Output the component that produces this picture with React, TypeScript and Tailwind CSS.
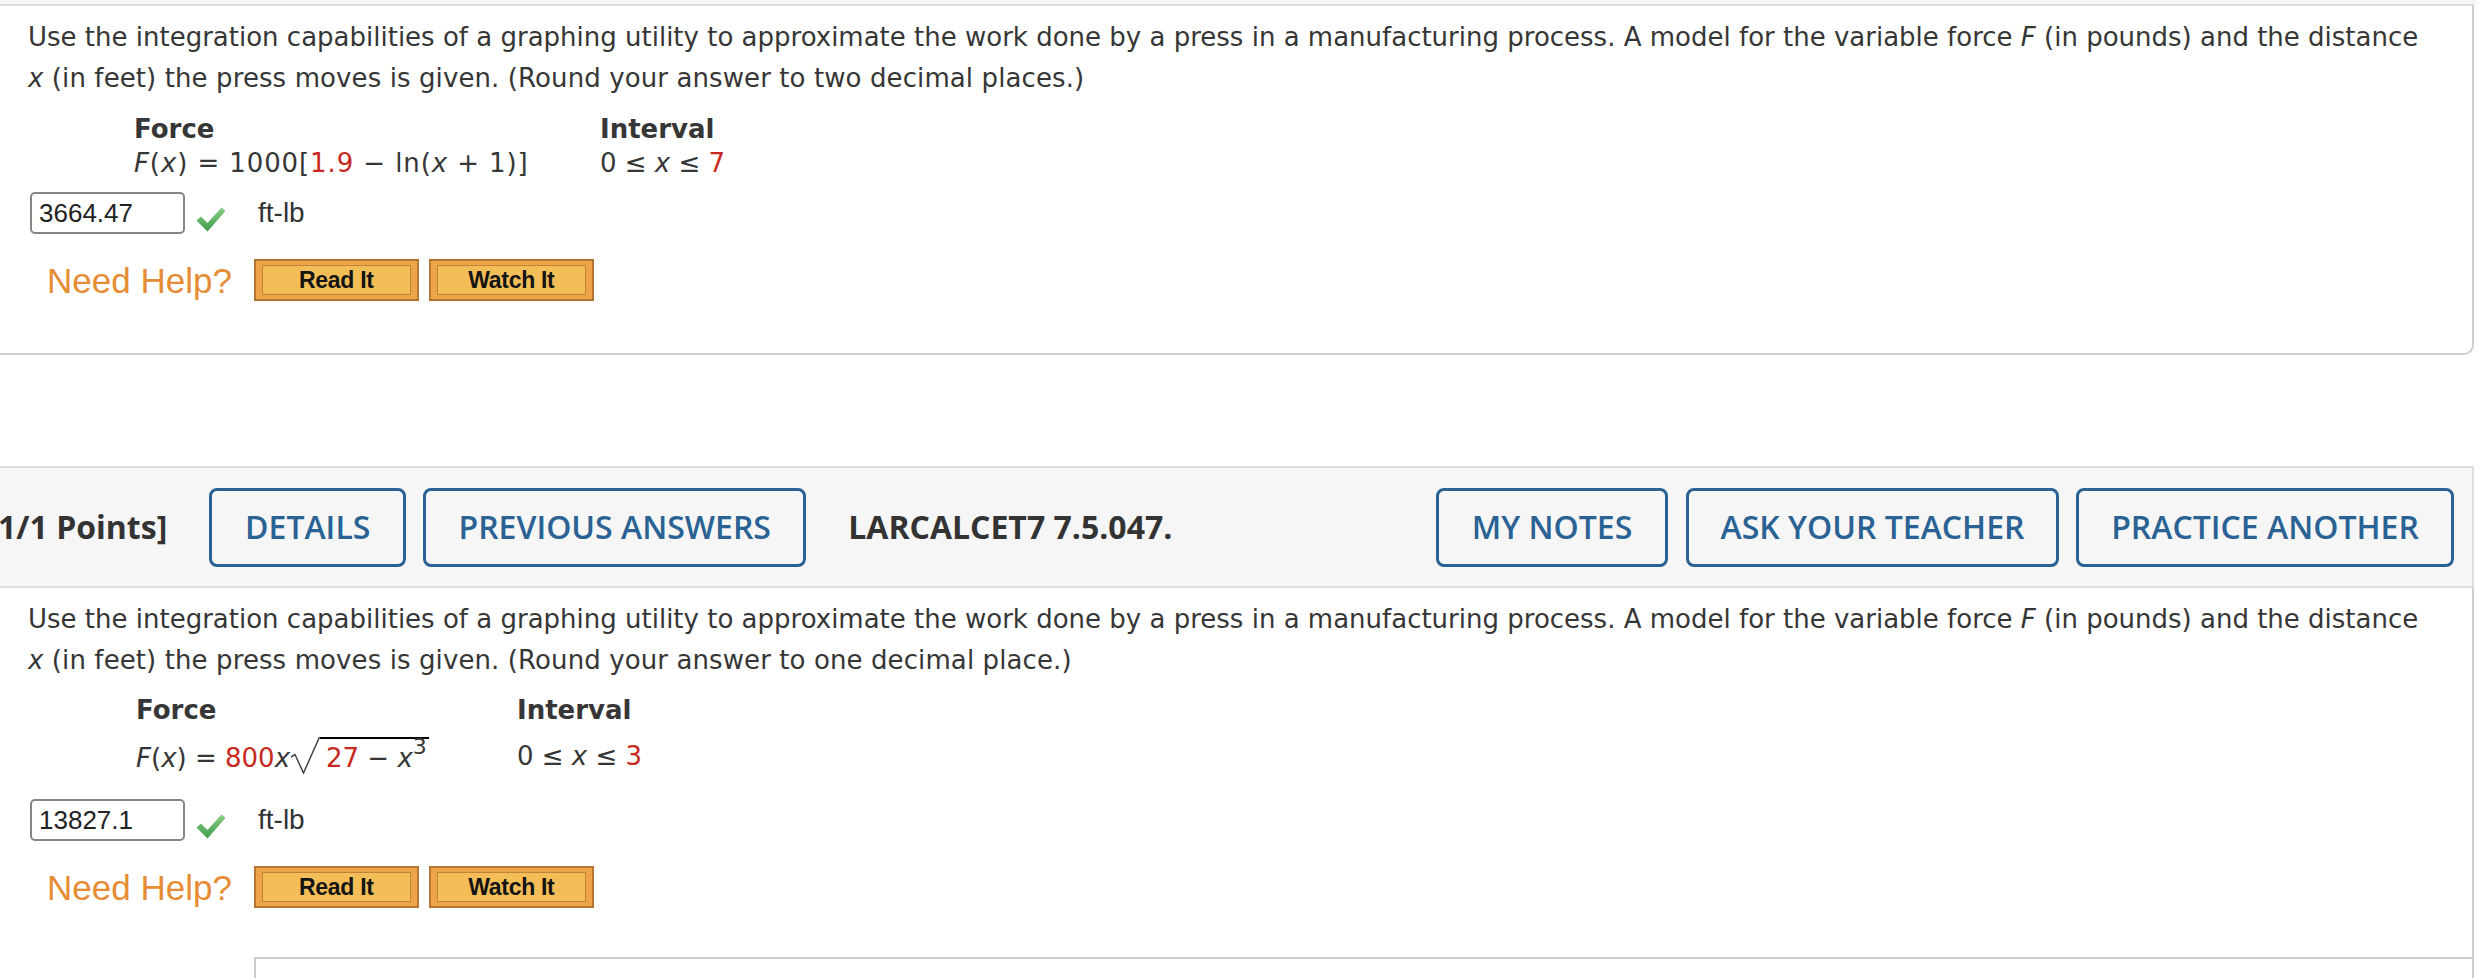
import React from "react";

const body = "font-['DejaVu_Sans',Verdana,sans-serif] text-[#363636]";
const arial = "font-['Liberation_Sans',Arial,sans-serif]";
const open = "font-['Open_Sans',sans-serif]";
const red = "text-[#c8281e]";

function Check() {
  return (
    <svg width="30" height="25" viewBox="0 0 30 25" aria-hidden="true">
      <defs>
        <linearGradient id="ck" x1="0" y1="0" x2="0" y2="1">
          <stop offset="0" stopColor="#8bd087" />
          <stop offset="1" stopColor="#3f9a4a" />
        </linearGradient>
      </defs>
      <path d="M0.5 13.5 L5 9.5 L11.5 16 L25.5 0.5 L29.5 4 L11.5 24.5 Z" fill="url(#ck)" />
    </svg>
  );
}

function HelpButton({ label, className }: { label: string; className?: string }) {
  return (
    <div className={`h-[42px] w-[165px] border-2 border-[#b5762f] bg-[#eea448] px-[6px] py-[4px] ${className ?? ""}`}>
      <div className={`flex h-full items-center justify-center border border-[#c08438] bg-[#f3be57] ${arial} text-[23px] font-bold tracking-[-0.3px] text-[#141414]`}>
        {label}
      </div>
    </div>
  );
}

function Answer({ value }: { value: string }) {
  return (
    <div className="ml-[2px] flex items-center">
      <div className={`flex h-[42px] w-[155px] items-center rounded-[5px] border-2 border-[#858585] pl-[7px] ${arial} text-[26px] text-[#222]`}>
        {value}
      </div>
      <div className="ml-[11px] mt-[12px]">
        <Check />
      </div>
      <span className={`ml-[32px] ${arial} text-[28px] text-[#333]`}>ft-lb</span>
    </div>
  );
}

function NeedHelp({ className }: { className?: string }) {
  return (
    <div className={`ml-[19px] flex items-center ${className ?? ""}`}>
      <span className={`${arial} text-[35px] leading-none text-[#e58c35]`}>Need Help?</span>
      <HelpButton label="Read It" className="ml-[22px]" />
      <HelpButton label="Watch It" className="ml-[10px]" />
    </div>
  );
}

function Question({ places }: { places: string }) {
  return (
    <p className="whitespace-nowrap text-[26px] leading-[41px]">
      Use the integration capabilities of a graphing utility to approximate the work done by a press in a
      manufacturing process. A model for the variable force <i>F</i> (in pounds) and the distance
      <br />
      <span className="tracking-[0.1px]">
        <i>x</i> (in feet) the press moves is given. (Round your answer to {places}.)
      </span>
    </p>
  );
}

function Radical() {
  return (
    <span className="inline-flex items-start">
      <svg width="30" height="38" viewBox="0 0 30 38" aria-hidden="true" className="mt-[-1px]">
        <path d="M1 21 L5 18.5 L13.5 37 L29.5 1" stroke="#444" strokeWidth="1.5" fill="none" />
      </svg>
      <span className="border-t-2 border-black pl-[6px] pr-[2px] pt-[2px] leading-[34px]">
        <span className={red}>27</span> − <i>x</i>
        <sup className="top-[-13px] text-[22px]">3</sup>
      </span>
    </span>
  );
}

function Bar() {
  const btn = `flex h-[79px] items-center justify-center rounded-[8px] border-[3px] border-[#2a6294] ${open} text-[32px] font-semibold text-[#2a6294]`;
  return (
    <div className={`mt-[111px] mr-[4px] flex h-[122px] items-center border-y-2 border-r-2 border-[#dedede] bg-[#f6f6f6] pr-[18px] ${open}`}>
      <span className="ml-[-2px] text-[32px] font-bold text-[#333]">1/1 Points]</span>
      <div className={`ml-[42px] w-[197px] ${btn}`}>DETAILS</div>
      <div className={`ml-[17px] w-[383px] ${btn}`}>PREVIOUS ANSWERS</div>
      <span className="ml-[42px] text-[32px] font-bold text-[#333]">LARCALCET7 7.5.047.</span>
      <div className="flex-1" />
      <div className={`w-[232px] ${btn}`}>MY NOTES</div>
      <div className={`ml-[18px] w-[373px] ${btn}`}>ASK YOUR TEACHER</div>
      <div className={`ml-[17px] w-[378px] ${btn}`}>PRACTICE ANOTHER</div>
    </div>
  );
}

export default function App() {
  return (
    <div className={`h-[978px] w-[2478px] overflow-hidden bg-white ${body}`}>
      <div className="h-[4px] bg-[#f6f6f6]" />

      <section className="mr-[4px] h-[351px] rounded-br-[10px] border-y-2 border-r-2 border-t-[#dcdcdc] border-r-[#cfcfcf] border-b-[#cfcfcf] pl-[28px] pt-[11px]">
        <Question places="two decimal places" />
        <div className="ml-[106px] mt-[13px] grid grid-cols-[466px_auto] text-[26px] leading-[34px]">
          <b>Force</b>
          <b>Interval</b>
          <span className="tracking-[0.9px]">
            <i>F</i>(<i>x</i>) = 1000[<span className={red}>1.9</span> − ln(<i>x</i> + 1)]
          </span>
          <span>
            0 ≤ <i>x</i> ≤ <span className={red}>7</span>
          </span>
        </div>
        <div className="mt-[12px]">
          <Answer value="3664.47" />
        </div>
        <NeedHelp className="mt-[25px]" />
      </section>

      <Bar />

      <section className="mr-[4px] h-[400px] border-r-2 border-[#cfcfcf] pt-[11px]">
        <div className="pl-[28px]">
          <Question places="one decimal place" />
          <div className="ml-[108px] mt-[12px] grid grid-cols-[381px_auto] items-end text-[26px] leading-[34px]">
            <b>Force</b>
            <b>Interval</b>
            <span className="mt-[10px] flex items-end">
              <span>
                <i>F</i>(<i>x</i>) = <span className={red}>800</span>
                <i>x</i>
              </span>
              <Radical />
            </span>
            <span className="mb-[2px]">
              0 ≤ <i>x</i> ≤ <span className={red}>3</span>
            </span>
          </div>
          <div className="mt-[24px]">
            <Answer value="13827.1" />
          </div>
          <NeedHelp className="mt-[25px]" />
        </div>
        <div className="ml-[254px] mt-[49px] h-[40px] border-l-2 border-t-2 border-[#cccccc]" />
      </section>
    </div>
  );
}
